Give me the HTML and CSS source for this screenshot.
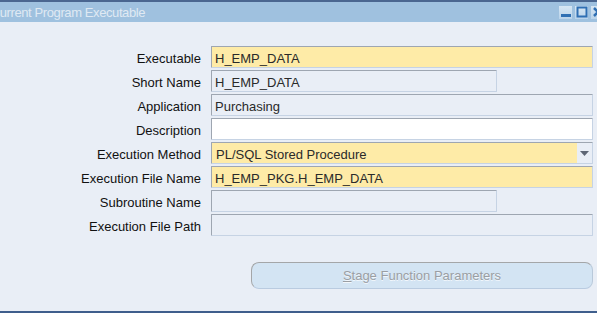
FILE: index.html
```html
<!DOCTYPE html>
<html lang="en">
	<head>
		<meta charset="UTF-8">
		<title>Concurrent Program Executable</title>
		<link rel="stylesheet" href="styles.css">
	</head>
	<body>
		<div class="window">
			<!-- Title bar -->
			<div class="title-bar">
				<span class="title">Concurrent Program Executable</span>
				<div class="win-buttons">
					<span class="win-btn">
						<svg width="12" height="12" viewBox="0 0 12 12"><rect x="1" y="8" width="10" height="3" fill="#2f6fb3"/></svg>
					</span>
					<span class="win-btn">
						<svg width="12" height="12" viewBox="0 0 12 12"><rect x="1.5" y="1.5" width="9" height="9" fill="none" stroke="#2f6fb3" stroke-width="2"/></svg>
					</span>
					<span class="win-btn">
						<svg width="12" height="12" viewBox="0 0 12 12"><path d="M2 2 L10 10 M10 2 L2 10" stroke="#2f6fb3" stroke-width="2.5"/></svg>
					</span>
				</div>
			</div>

			<!-- Form -->
			<div class="form">
				<label class="label">Executable</label>
				<div class="field required wide">H_EMP_DATA</div>

				<label class="label">Short Name</label>
				<div class="field readonly short">H_EMP_DATA</div>

				<label class="label">Application</label>
				<div class="field readonly wide">Purchasing</div>

				<label class="label">Description</label>
				<div class="field blank wide"></div>

				<label class="label">Execution Method</label>
				<div class="field required wide select">
					<span class="select-value">PL/SQL Stored Procedure</span>
					<span class="select-arrow">
						<svg width="9" height="5" viewBox="0 0 9 5"><path d="M0 0 H9 L4.5 5 Z" fill="#5e6675"/></svg>
					</span>
				</div>

				<label class="label">Execution File Name</label>
				<div class="field required wide">H_EMP_PKG.H_EMP_DATA</div>

				<label class="label">Subroutine Name</label>
				<div class="field readonly short"></div>

				<label class="label">Execution File Path</label>
				<div class="field readonly wide"></div>
			</div>

			<div class="actions">
				<button class="stage-btn"><u>S</u>tage Function Parameters</button>
			</div>
		</div>
	</body>
</html>
```

FILE: styles.css
```css
body {
	margin: 0;
	font-family: "Liberation Sans", Arial, sans-serif;
	background: #e9eef6;
	overflow: hidden;
}

.window {
	width: 597px;
	height: 313px;
	box-sizing: border-box;
	border-top: 2px solid #4a6690;
	border-bottom: 2px solid #3f5e8c;
	display: flex;
	flex-direction: column;
}

.title-bar {
	height: 20px;
	background: #9fc1df;
	display: flex;
	align-items: center;
	justify-content: space-between;
	overflow: hidden;
}

.title {
	color: #dfe9f3;
	font-size: 13px;
	letter-spacing: -0.4px;
	margin-left: -29px;
	white-space: nowrap;
}

.win-buttons {
	display: flex;
	gap: 3px;
	margin-right: -7px;
}

.win-btn {
	width: 13px;
	height: 13px;
	background: linear-gradient(#d7e6f3, #b9d3ea);
	display: flex;
	align-items: center;
	justify-content: center;
}

.form {
	display: grid;
	grid-template-columns: 201px 382px;
	column-gap: 10px;
	row-gap: 2px;
	margin-top: 24px;
}

.label {
	font-size: 13px;
	color: #111;
	text-align: right;
	padding-top: 5px;
}

.field {
	height: 22px;
	box-sizing: border-box;
	border: 1px solid;
	border-color: #9ea6b1 #c6d3e4 #c6d3e4 #9ea6b1;
	border-radius: 1px;
	font-size: 13px;
	color: #2a2a2a;
	padding: 4px 0 0 3px;
	white-space: nowrap;
	overflow: hidden;
}

.wide {
	width: 382px;
}

.short {
	width: 286px;
}

.required {
	background: #feeba7;
}

.readonly {
	background: #e9eef6;
}

.blank {
	background: #ffffff;
}

.select {
	display: flex;
	padding: 0;
}

.select-value {
	flex: 1;
	padding: 4px 0 0 4px;
}

.select-arrow {
	width: 15px;
	background: #e9eef6;
	display: flex;
	align-items: center;
	justify-content: center;
}

.actions {
	display: flex;
	justify-content: flex-end;
	padding-right: 4px;
	margin-top: 26px;
}

.stage-btn {
	width: 342px;
	height: 27px;
	border: 1px solid;
	border-color: #a4a6a8 #b9c9da #b9cbe0 #a4a6a8;
	border-radius: 8px;
	background: #d3e4f3;
	color: #9a9ea3;
	font-family: "Liberation Sans", Arial, sans-serif;
	font-size: 13px;
	text-shadow: 0 1px 0 #f2f7fc;
}
```
